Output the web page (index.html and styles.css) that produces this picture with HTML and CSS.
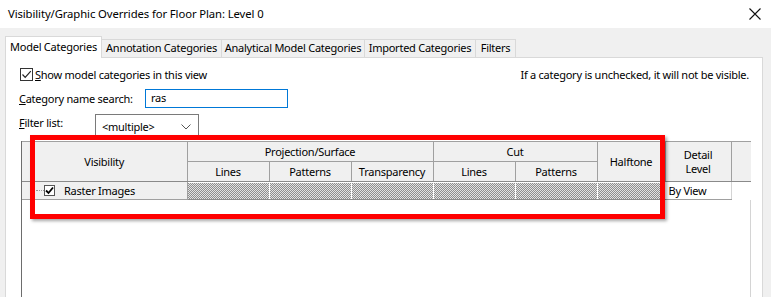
FILE: index.html
```html
<!DOCTYPE html>
<html lang="en">
<head>
    <meta charset="UTF-8">
    <meta name="viewport" content="width=device-width, initial-scale=1.0">
    <title>Visibility/Graphic Overrides</title>
    <link rel="stylesheet" href="styles.css">
</head>
<body>
    <!-- shared dither pattern for the overridden cells -->
    <svg class="defs" width="0" height="0">
        <defs>
            <pattern id="dither" width="2" height="2" patternUnits="userSpaceOnUse">
                <rect width="2" height="2" fill="#e2e2e2"/>
                <rect width="1" height="1" fill="#8e8e8e"/>
                <rect x="1" y="1" width="1" height="1" fill="#8e8e8e"/>
            </pattern>
        </defs>
    </svg>

    <!-- window title -->
    <div class="titlebar">
        <span class="title">Visibility/Graphic Overrides for Floor Plan: Level 0</span>
        <svg class="close" width="12" height="12" viewBox="0 0 12 12">
            <path d="M0.5 0.5 L11.5 11.5 M11.5 0.5 L0.5 11.5" stroke="#111" stroke-width="1.1" fill="none"/>
        </svg>
    </div>

    <div class="dialog">
        <div class="tabs">
            <div class="tab active tab-model">Model Categories</div>
            <div class="tab tab-annot">Annotation Categories</div>
            <div class="tab tab-analytic">Analytical Model Categories</div>
            <div class="tab tab-imported">Imported Categories</div>
            <div class="tab tab-filters">Filters</div>
        </div>

        <div class="panel">
            <div class="show-row">
                <label class="check-label">
                    <span class="checkbox">
                        <svg width="11" height="11" viewBox="0 0 11 11"><path d="M1.5 5.5 L4.2 8.3 L9.8 2.2" stroke="#222" stroke-width="1.2" fill="none"/></svg>
                    </span>
                    <span><u>S</u>how model categories in this view</span>
                </label>
                <span class="hint">If a category is unchecked, it will not be visible.</span>
            </div>

            <div class="search-row">
                <span class="search-label"><u>C</u>ategory name search:</span>
                <div class="search-box">ras</div>
            </div>

            <div class="filter-row">
                <span class="filter-label"><u>F</u>ilter list:</span>
                <div class="select">
                    <span>&lt;multiple&gt;</span>
                    <svg width="10" height="6" viewBox="0 0 10 6"><path d="M0.5 0.5 L5 5 L9.5 0.5" stroke="#555" stroke-width="1" fill="none"/></svg>
                </div>
            </div>

            <div class="grid-wrap">
                <table class="grid">
                    <colgroup>
                        <col class="c-vis">
                        <col class="c-std"><col class="c-std"><col class="c-std">
                        <col class="c-std"><col class="c-std">
                        <col class="c-half"><col class="c-detail"><col class="c-rest">
                    </colgroup>
                    <tr class="head-top">
                        <th rowspan="2">Visibility</th>
                        <th colspan="3">Projection/Surface</th>
                        <th colspan="2">Cut</th>
                        <th rowspan="2">Halftone</th>
                        <th rowspan="2">Detail<br>Level</th>
                        <th rowspan="2" class="blank"></th>
                    </tr>
                    <tr class="head-sub">
                        <th>Lines</th>
                        <th>Patterns</th>
                        <th>Transparency</th>
                        <th>Lines</th>
                        <th>Patterns</th>
                    </tr>
                    <tr class="data-row">
                        <td class="name-cell">
                            <div class="name-inner">
                                <span class="tree-dots"></span>
                                <span class="row-check">
                                    <svg width="9" height="9" viewBox="0 0 9 9"><path d="M1 4.5 L3.5 7 L8 1.5" stroke="#000" stroke-width="1.8" fill="none"/></svg>
                                </span>
                                <span>Raster Images</span>
                            </div>
                        </td>
                        <td class="hatch"><svg class="fill"><rect width="100%" height="100%" fill="url(#dither)"/></svg></td>
                        <td class="hatch"><svg class="fill"><rect width="100%" height="100%" fill="url(#dither)"/></svg></td>
                        <td class="hatch"><svg class="fill"><rect width="100%" height="100%" fill="url(#dither)"/></svg></td>
                        <td class="hatch"><svg class="fill"><rect width="100%" height="100%" fill="url(#dither)"/></svg></td>
                        <td class="hatch"><svg class="fill"><rect width="100%" height="100%" fill="url(#dither)"/></svg></td>
                        <td class="hatch"><svg class="fill"><rect width="100%" height="100%" fill="url(#dither)"/></svg></td>
                        <td class="detail-cell">By View</td>
                        <td class="empty"></td>
                    </tr>
                </table>
                <!-- red highlight drawn over the grid -->
                <div class="highlight"></div>
            </div>
        </div>
    </div>
</body>
</html>
```

FILE: styles.css
```css
* {
    margin: 0;
    padding: 0;
    box-sizing: border-box;
}
body {
    font-family: "Noto Sans", "Open Sans", sans-serif;
    font-size: 11px;
    letter-spacing: -0.25px;
    color: #000;
    background-color: #f0f0f0;
    width: 771px;
    height: 297px;
    overflow: hidden;
}
.defs {
    position: absolute;
}
.titlebar {
    height: 28px;
    background-color: #fff;
    display: flex;
    align-items: center;
    justify-content: space-between;
    padding: 0 10px 2px 8px;
}
.title {
    font-size: 11.3px;
    letter-spacing: -0.1px;
}
.close {
    margin-top: 1px;
}
.dialog {
    padding: 8px 8px 0 5px;
}
.tabs {
    display: flex;
    align-items: flex-end;
    height: 21px;
}
.tab {
    height: 18px;
    border: 1px solid #d9d9d9;
    border-bottom: none;
    border-left: none;
    background-color: #f0f0f0;
    text-align: center;
    line-height: 16px;
    white-space: nowrap;
}
.tab.active {
    height: 22px;
    margin-bottom: -1px;
    background-color: #fff;
    border-left: 1px solid #d9d9d9;
    line-height: 19px;
    position: relative;
    z-index: 1;
}
.tab-model { width: 97px; }
.tab-annot { width: 120px; }
.tab-analytic { width: 143px; }
.tab-imported { width: 111px; }
.tab-filters { width: 40px; }

.panel {
    background-color: #fff;
    border: 1px solid #d9d9d9;
    border-bottom: none;
    height: 240px;
    width: 758px;
    padding: 9px 12px 0 14px;
}
.show-row {
    display: flex;
    justify-content: space-between;
    align-items: center;
    height: 14px;
}
.check-label {
    display: flex;
    align-items: center;
    gap: 2px;
}
.checkbox {
    width: 13px;
    height: 13px;
    border: 1px solid #333;
    display: flex;
    align-items: center;
    justify-content: center;
}
.hint {
    margin-right: 1px;
}
.search-row {
    display: flex;
    align-items: center;
    margin-top: 8px;
    height: 19px;
}
.search-label {
    width: 126px;
    margin-left: -1px;
}
.search-box {
    width: 143px;
    height: 19px;
    border: 1px solid #0078d7;
    padding-left: 5px;
    line-height: 16px;
}
.filter-row {
    display: flex;
    align-items: flex-start;
    margin-top: 6px;
    height: 25px;
}
.filter-label {
    width: 76px;
    margin-left: -1px;
    padding-top: 1px;
}
.select {
    width: 104px;
    height: 25px;
    border: 1px solid #7a7a7a;
    display: flex;
    align-items: center;
    justify-content: space-between;
    padding: 0 7px 0 6px;
    background-color: #fff;
}

.grid-wrap {
    position: relative;
    margin: 2px 0 0 1px;
    width: 730px;
    height: 170px;
    border-left: 1px solid #6d6d6d;
    border-right: 1px solid #d4d4d4;
}
.grid {
    border-collapse: collapse;
    table-layout: fixed;
    width: 729px;
}
.c-vis { width: 165px; }
.c-std { width: 82px; }
.c-half { width: 68px; }
.c-detail { width: 66px; }
.c-rest { width: 20px; }
.grid th {
    background-color: #f0f0f0;
    font-weight: normal;
    border: 1px solid #a0a0a0;
    line-height: 14px;
    height: 20px;
    padding: 0;
}
.grid th:first-child {
    border-left: none;
}
.grid th.blank {
    border-right: none;
}
.grid .head-sub th {
    height: 20px;
    border-bottom: 1px solid #8a8a8a;
}
.grid .head-top th[rowspan] {
    border-bottom: 1px solid #8a8a8a;
}
.grid td {
    height: 18px;
    padding: 0;
}
.name-cell {
    background-color: #f0f0f0;
    border-bottom: 1px solid #a0a0a0;
    border-right: 1px solid #a0a0a0;
    white-space: nowrap;
}
.name-inner {
    display: flex;
    align-items: center;
}
.tree-dots {
    width: 8px;
    margin-left: 14px;
    border-bottom: 1px dotted #999;
}
.row-check {
    display: flex;
    width: 11px;
    height: 11px;
    border: 1px solid #555;
    background-color: #fff;
    align-items: center;
    justify-content: center;
    margin: 0 9px 1px 0;
}
.hatch {
    border: 1px solid #fff;
    border-bottom: 1px solid #8a8a8a;
    line-height: 0;
}
.hatch .fill {
    display: block;
    width: 100%;
    height: 16px;
    shape-rendering: crispEdges;
}
.detail-cell {
    background-color: #fff;
    padding-left: 3px !important;
    border-bottom: 1px solid #a0a0a0;
    border-right: 1px solid #d4d4d4;
}
.empty {
    background-color: #fff;
}

.highlight {
    position: absolute;
    left: 8px;
    top: -6px;
    width: 635px;
    height: 84px;
    border: 5px solid #ff0000;
    box-shadow: 2px 2px 3px rgba(0, 0, 0, 0.35);
}
```
